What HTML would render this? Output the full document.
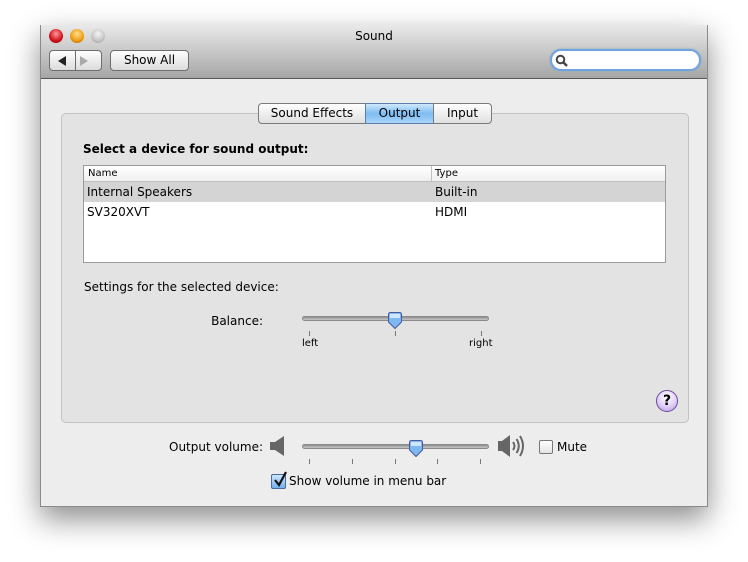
<!DOCTYPE html>
<html><head><meta charset="utf-8"><style>
*{margin:0;padding:0;box-sizing:border-box}
body{width:748px;height:562px;background:#fff;position:relative;overflow:hidden;font-family:"DejaVu Sans","Liberation Sans",sans-serif;font-size:12px;color:#000}
.a{position:absolute}
#win{left:40px;top:25px;width:668px;height:482px;background:#ededed;box-shadow:0 12px 28px rgba(0,0,0,.45);border:1px solid #8a8a8a;border-top:none}
#tb{left:0;top:0;width:666px;height:54px;background:linear-gradient(#e9e9e9,#a6a6a6);border-bottom:1px solid #555;border-radius:4px 4px 0 0}
.tl{width:14px;height:14px;border-radius:50%;top:4px}
.btn{border:1px solid #6d6d6d;border-radius:4px;background:linear-gradient(#fdfdfd,#dcdcdc);height:21px}
.tab{top:0;height:21px;border:1px solid #7a7a7a;background:linear-gradient(#fefefe,#e0e0e0);text-align:center;line-height:19px}
.track{height:5px;border-radius:3px;background:linear-gradient(#8e8e8e,#c8c8c8);border:1px solid #8a8a8a}
.tick{width:1px;height:5px;background:#777}
.thumb{width:16px;height:18px}
.sm{font-size:10px}
</style></head><body>
<div id="win" class="a">
 <div id="tb" class="a">
  <div class="a tl" style="left:8px;background:radial-gradient(circle at 50% 35%,#ff9a9a,#d0101a 60%,#8a0008)"></div>
  <div class="a tl" style="left:29px;background:radial-gradient(circle at 50% 35%,#ffe08a,#f09a10 60%,#a05a00)"></div>
  <div class="a tl" style="left:50px;background:radial-gradient(circle at 50% 35%,#f4f4f4,#c4c4c4 60%,#999)"></div>
  <div class="a" style="left:0;width:666px;top:4px;text-align:center">Sound</div>
  <div class="a btn" style="left:8px;top:25px;width:53px"></div>
  <div class="a" style="left:34px;top:25px;width:1px;height:21px;background:#6d6d6d"></div>
  <svg class="a" style="left:16px;top:31px" width="40" height="10"><path d="M1 5L9 0V10Z" fill="#222"/><path d="M23 0L31 5L23 10Z" fill="#aaa"/></svg>
  <div class="a btn" style="left:69px;top:25px;width:79px;text-align:center;line-height:19px">Show All</div>
  <div class="a" style="left:509px;top:24px;width:151px;height:22px;border-radius:11px;background:#fff;border:2px solid #6fa3e0;box-shadow:0 0 2px #8ab"></div>
  <svg class="a" style="left:514px;top:29px" width="14" height="14"><circle cx="5.5" cy="5.5" r="3.8" fill="none" stroke="#444" stroke-width="2"/><path d="M8.5 8.5L12 12" stroke="#444" stroke-width="2.4"/></svg>
 </div>
 <div class="a" style="left:20px;top:88px;width:628px;height:310px;background:#e3e3e3;border:1px solid #c2c2c2;border-radius:5px"></div>
 <div class="a" style="left:217px;top:78px;width:234px;height:21px">
  <div class="a tab" style="left:0;width:108px;border-radius:4px 0 0 4px">Sound Effects</div>
  <div class="a tab" style="left:107px;width:69px;background:linear-gradient(#d0e8fc,#7cbdf2 50%,#a9d4f8);border-color:#5b7fa8">Output</div>
  <div class="a tab" style="left:175px;width:59px;border-radius:0 4px 4px 0">Input</div>
 </div>
 <div class="a" style="left:42px;top:117px;font-weight:bold">Select a device for sound output:</div>
 <div class="a" style="left:42px;top:140px;width:583px;height:98px;background:#fff;border:1px solid #9a9a9a">
  <div class="a sm" style="left:0;top:0;width:581px;height:16px;border-bottom:1px solid #c0c0c0;background:linear-gradient(#fff,#f0f0f0)"></div>
  <div class="a" style="left:347px;top:0;width:1px;height:16px;background:#c0c0c0"></div>
  <div class="a sm" style="left:4px;top:2px">Name</div>
  <div class="a sm" style="left:351px;top:2px">Type</div>
  <div class="a" style="left:0;top:16px;width:581px;height:20px;background:#d4d4d4"></div>
  <div class="a" style="left:3px;top:19px">Internal Speakers</div>
  <div class="a" style="left:351px;top:19px">Built-in</div>
  <div class="a" style="left:3px;top:39px">SV320XVT</div>
  <div class="a" style="left:351px;top:39px">HDMI</div>
 </div>
 <div class="a" style="left:43px;top:255px">Settings for the selected device:</div>
 <div class="a" style="left:122px;top:289px;width:100px;text-align:right">Balance:</div>
 <div class="a track" style="left:261px;top:291px;width:187px"></div>
 <div class="a tick" style="left:268px;top:306px"></div><div class="a tick" style="left:354px;top:306px"></div><div class="a tick" style="left:440px;top:306px"></div>
 <svg class="a thumb" style="left:346px;top:287px" width="16" height="18"><path d="M1.5 2.5Q1.5 0.5 3.5 0.5H12.5Q14.5 0.5 14.5 2.5V10L8 16.5L1.5 10Z" fill="#7db8f2" stroke="#4a5a9a"/><path d="M3 2H13V6H3Z" fill="#cfe6fc"/></svg>
 <div class="a sm" style="left:261px;top:313px">left</div>
 <div class="a sm" style="left:428px;top:313px">right</div>
 <div class="a" style="left:615px;top:365px;width:22px;height:22px;border-radius:50%;border:1px solid #6a4a9a;background:radial-gradient(circle at 50% 30%,#fff,#e4d4f8 50%,#b89ae0);text-align:center;font-weight:bold;font-size:14px;line-height:20px">?</div>
 <div class="a" style="left:102px;top:415px;width:120px;text-align:right">Output volume:</div>
 <svg class="a" style="left:228px;top:411px" width="20" height="20"><path d="M1 6H6L15 0V20L6 14H1Z" fill="#666"/></svg>
 <div class="a track" style="left:261px;top:419px;width:187px"></div>
 <div class="a tick" style="left:268px;top:434px"></div><div class="a tick" style="left:311px;top:434px"></div><div class="a tick" style="left:354px;top:434px"></div><div class="a tick" style="left:396px;top:434px"></div><div class="a tick" style="left:439px;top:434px"></div>
 <svg class="a thumb" style="left:367px;top:415px" width="16" height="18"><path d="M1.5 2.5Q1.5 0.5 3.5 0.5H12.5Q14.5 0.5 14.5 2.5V10L8 16.5L1.5 10Z" fill="#7db8f2" stroke="#4a5a9a"/><path d="M3 2H13V6H3Z" fill="#cfe6fc"/></svg>
 <svg class="a" style="left:456px;top:407px" width="32" height="28"><path d="M1 9H5L13 3V25L5 19H1Z" fill="#666"/><path d="M16 10Q19 14 16 18M19.5 7Q24 14 19.5 21M23 4Q29 14 23 24" fill="none" stroke="#666" stroke-width="2"/></svg>
 <div class="a" style="left:498px;top:415px;width:14px;height:14px;border:1px solid #777;border-radius:2px;background:linear-gradient(#fff,#e4e4e4)"></div>
 <div class="a" style="left:516px;top:415px">Mute</div>
 <div class="a" style="left:230px;top:449px;width:15px;height:15px;border:1px solid #4a6a9a;border-radius:2px;background:linear-gradient(#cfe6fc,#6fb0ee)"></div>
 <svg class="a" style="left:231px;top:445px" width="16" height="18"><path d="M3 10L7 15L14 2" fill="none" stroke="#111" stroke-width="2.2"/></svg>
 <div class="a" style="left:248px;top:449px">Show volume in menu bar</div>
</div>
</body></html>
